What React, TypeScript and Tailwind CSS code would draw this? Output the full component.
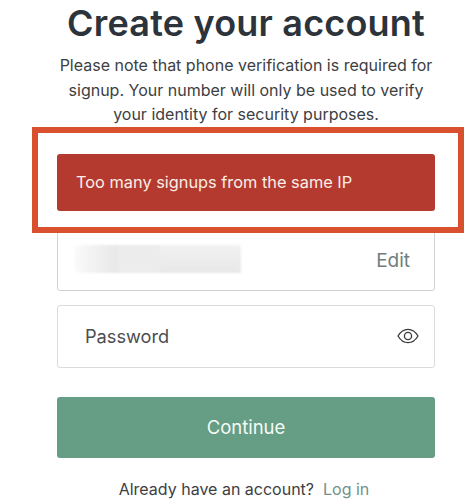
const font = { fontFamily: 'Inter, "Liberation Sans", sans-serif' }

function EyeIcon() {
  return (
    <svg width="22" height="16" viewBox="0 0 22 16" fill="none" stroke="#3a3a3d" strokeWidth="1.3">
      <path d="M1 8C3.6 3.6 7 1.3 11 1.3S18.4 3.6 21 8C18.4 12.4 15 14.7 11 14.7S3.6 12.4 1 8Z" />
      <circle cx="11" cy="8" r="3.6" />
    </svg>
  )
}

export default function App() {
  return (
    <div className="relative h-[502px] w-[474px] overflow-hidden bg-white" style={font}>
      <div className="ml-[57px] flex w-[378px] flex-col">
        <h1 className="-mx-8 h-[46px] text-center text-[36px] leading-[46px] font-semibold tracking-[0.2px] text-[#2d333a]">
          Create your account
        </h1>
        <p className="-mx-4 mt-[7px] text-center text-[16px] leading-[24.6px] text-[#3c4043]">
          Please note that phone verification is required for
          <br />
          signup. Your number will only be used to verify
          <br />
          your identity for security purposes.
        </p>

        <div className="mt-[27px] flex h-[57px] items-center rounded-[3px] bg-[#b43a2f] px-[19px] text-[16.35px] text-[#fbeee6]">
          Too many signups from the same IP
        </div>

        <div className="mt-[17px] flex h-[63px] items-center justify-between rounded-[3px] border border-[#cfd2d4] pr-[24px] pl-[16px]">
          <div className="flex h-[28px] w-[167px] blur-[1px]">
            <div className="h-full w-[44px] rounded-l-md bg-gradient-to-r from-[#fbfbfb] via-[#f1f1f1] to-[#e8e8e8]" />
            <div className="h-full w-[42px] bg-[#ececec]" />
            <div className="h-full w-[81px] bg-gradient-to-b from-[#f2f2f2] to-[#e8e8e8]" />
          </div>
          <span className="mt-[4px] text-[19px] text-[#6f7e7c]">Edit</span>
        </div>

        <div className="mt-[14px] flex h-[63px] items-center justify-between rounded-[3px] border border-[#d9dbdc] pr-[15px] pl-[27px]">
          <span className="text-[18.2px] text-[#4a4d50]">Password</span>
          <EyeIcon />
        </div>

        <button
          type="button"
          className="mt-[29px] h-[61px] rounded-[3px] bg-[#659e84] pt-[2px] text-[18.5px] text-[#f6faf7]"
        >
          Continue
        </button>

        <p className="mt-[21px] pr-[4px] text-center text-[16px] leading-[20px] text-[#3c4043]">
          Already have an account?
          <span className="ml-[9px] text-[#71918a]">Log in</span>
        </p>
      </div>

      <div className="pointer-events-none absolute top-[127px] left-[32px] h-[106px] w-[432px] border-[6px] border-[#d9502f]" />
    </div>
  )
}
